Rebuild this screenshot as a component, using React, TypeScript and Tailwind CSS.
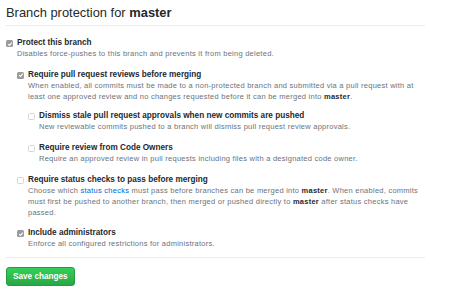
import React from 'react';

interface OptionProps {
  title: string;
  checked?: boolean;
  children?: React.ReactNode;
  note: React.ReactNode;
  className?: string;
}

const Box: React.FC<{ checked?: boolean }> = ({ checked }) =>
  checked ? (
    <span className="mt-[3px] flex h-[7px] w-[7px] shrink-0 items-center justify-center rounded-[1.5px] bg-[#9b9b9b]">
      <svg viewBox="0 0 8 8" className="h-[6px] w-[6px]">
        <path d="M1.5 4.2 L3.3 5.9 L6.6 2.2" fill="none" stroke="#fff" strokeWidth="1.4" />
      </svg>
    </span>
  ) : (
    <span className="mt-[3px] h-[7px] w-[7px] shrink-0 rounded-[1.5px] border border-[#d5d5d5] bg-white" />
  );

const Option: React.FC<OptionProps> = ({ title, checked, children, note, className = '' }) => (
  <div className={`flex gap-[4px] ${className}`}>
    <Box checked={checked} />
    <div className="flex-1">
      <div className="text-[8.2px] font-bold leading-[12px] text-[#24292e]">{title}</div>
      <p className="text-[7.5px] leading-[10.8px] tracking-[0.25px] text-[#6a737d]">{note}</p>
      {children}
    </div>
  </div>
);

export default function App() {
  return (
    <div
      className="h-[292px] w-[474px] overflow-hidden bg-white pl-[6px] pt-[3px]"
      style={{ fontFamily: '"Liberation Sans", Arial, sans-serif' }}
    >
      <div className="w-[419px]">
        <h2 className="border-b border-[#eaecef] pb-[3px] text-[12.9px] leading-[19px] text-[#24292e]">
          Branch protection for <b className="font-bold">master</b>
        </h2>
        <Option
          className="mt-[11px]"
          checked
          title="Protect this branch"
          note="Disables force-pushes to this branch and prevents it from being deleted."
        >
          <Option
            className="mt-[9px]"
            checked
            title="Require pull request reviews before merging"
            note={
              <>
                When enabled, all commits must be made to a non-protected branch and submitted via a pull request with at
                least one approved review and no changes requested before it can be merged into{' '}
                <b className="font-bold text-[#24292e]">master</b>.
              </>
            }
          >
            <Option
              className="mt-[8px]"
              title="Dismiss stale pull request approvals when new commits are pushed"
              note="New reviewable commits pushed to a branch will dismiss pull request review approvals."
            />
            <Option
              className="mt-[9px]"
              title="Require review from Code Owners"
              note="Require an approved review in pull requests including files with a designated code owner."
            />
          </Option>
          <Option
            className="mt-[9px]"
            title="Require status checks to pass before merging"
            note={
              <>
                Choose which <span className="text-[#0366d6]">status checks</span> must pass before branches can be
                merged into <b className="font-bold text-[#24292e]">master</b>. When enabled, commits must first be
                pushed to another branch, then merged or pushed directly to{' '}
                <b className="font-bold text-[#24292e]">master</b> after status checks have passed.
              </>
            }
          />
          <Option
            className="mt-[9px]"
            checked
            title="Include administrators"
            note="Enforce all configured restrictions for administrators."
          />
        </Option>
        <div className="mt-[7px] border-t border-[#eaecef]" />
        <button className="mt-[9px] h-[19px] rounded-[3px] border border-[#2a9945] bg-gradient-to-b from-[#34d058] to-[#28a745] px-[6px] text-[8.2px] font-bold text-white">
          Save changes
        </button>
      </div>
    </div>
  );
}
